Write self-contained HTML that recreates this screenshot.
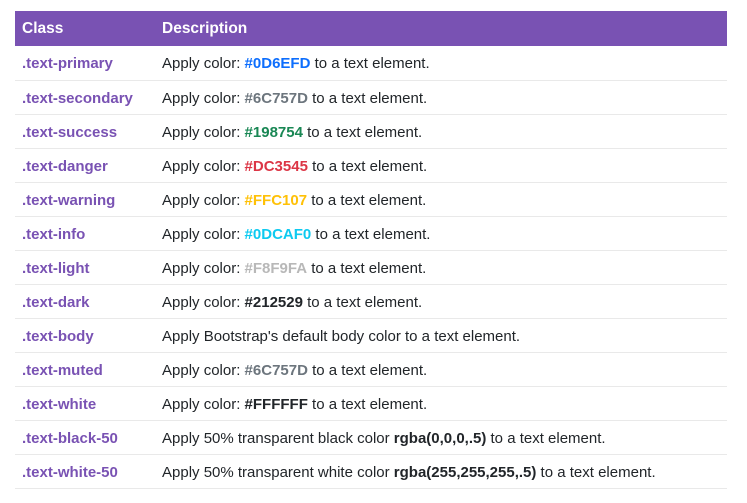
<!DOCTYPE html>
<html><head><style>
body{margin:0;background:#fff;font-family:"Liberation Sans",sans-serif;}
table{position:absolute;left:15px;top:11px;width:712px;border-collapse:collapse;font-size:15px;color:#212529;}
th{background:#7952b3;color:#fff;text-align:left;height:35px;padding:0 0 0 7px;font-size:15.5px;font-weight:bold;}
td{height:34px;border-bottom:1px solid #e9e9e9;padding:2px 0 0 7px;box-sizing:border-box;}
td:first-child{color:#7952b3;font-weight:bold;width:140px;}
b{font-weight:bold}
</style></head><body>
<table>
<tr><th>Class</th><th>Description</th></tr>
<tr><td>.text-primary</td><td>Apply color: <b style="color:#0d6efd">#0D6EFD</b> to a text element.</td></tr>
<tr><td>.text-secondary</td><td>Apply color: <b style="color:#6c757d">#6C757D</b> to a text element.</td></tr>
<tr><td>.text-success</td><td>Apply color: <b style="color:#198754">#198754</b> to a text element.</td></tr>
<tr><td>.text-danger</td><td>Apply color: <b style="color:#dc3545">#DC3545</b> to a text element.</td></tr>
<tr><td>.text-warning</td><td>Apply color: <b style="color:#ffc107">#FFC107</b> to a text element.</td></tr>
<tr><td>.text-info</td><td>Apply color: <b style="color:#0dcaf0">#0DCAF0</b> to a text element.</td></tr>
<tr><td>.text-light</td><td>Apply color: <b style="color:#b8b8b8">#F8F9FA</b> to a text element.</td></tr>
<tr><td>.text-dark</td><td>Apply color: <b style="color:#212529">#212529</b> to a text element.</td></tr>
<tr><td>.text-body</td><td>Apply Bootstrap's default body color to a text element.</td></tr>
<tr><td>.text-muted</td><td>Apply color: <b style="color:#6c757d">#6C757D</b> to a text element.</td></tr>
<tr><td>.text-white</td><td>Apply color: <b>#FFFFFF</b> to a text element.</td></tr>
<tr><td>.text-black-50</td><td>Apply 50% transparent black color <b>rgba(0,0,0,.5)</b> to a text element.</td></tr>
<tr><td>.text-white-50</td><td>Apply 50% transparent white color <b>rgba(255,255,255,.5)</b> to a text element.</td></tr>
</table>
</body></html>
